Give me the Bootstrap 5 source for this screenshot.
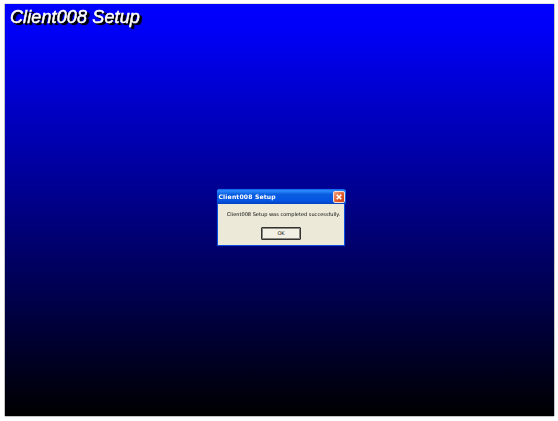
<!DOCTYPE html>
<html lang="en">
<head>
<meta charset="utf-8">
<title>Client008 Setup</title>
<link href="https://cdn.jsdelivr.net/npm/bootstrap@5.3.0/dist/css/bootstrap.min.css" rel="stylesheet">
<style>
html,body{height:100%;margin:0;background:#fff;overflow:hidden}
.shot-frame{width:558px;height:421px;padding:4px 4px 5px 5px}
.setup-screen{position:relative;height:412px;background:linear-gradient(to bottom,#0000ff 0%,#0000f8 6%,#000 100%);box-shadow:-1px 0 0 #c4c4c4,1px 0 0 #c4c4c4,0 1px 0 #c4c4c4,0 -1px 0 #e4e4e4}
.setup-title{margin:0;padding:2px 0 0 5px;font:italic 400 18px/22px "Liberation Sans",sans-serif;color:#fff;letter-spacing:.12px;-webkit-text-stroke:.5px #fff;text-shadow:1px 1px 0 #000,2px 2px 0 #000,3px 2px 1px #000;filter:blur(.25px)}
.xp-win{position:absolute;left:212px;top:185px;width:128px;height:57px;background:#ece9d8;border:1.5px solid #0a4ee0;border-top:0;border-radius:3px 3px 0 0;box-shadow:0 0 1px #003ccc}
.xp-bar{height:15px;margin:0 -1.5px;padding:0 1px 0 2px;background:linear-gradient(to bottom,#0a5fe8 0%,#2f8bff 12%,#0a5de0 35%,#0454e0 80%,#0340c0 100%);border-radius:3px 3px 0 0;color:#fff;font:700 6.1px/15px "DejaVu Sans",sans-serif;letter-spacing:.15px}
.xp-bar span{filter:blur(.25px)}
.xp-close{width:12px;height:12px;background:linear-gradient(135deg,#f0a080,#e05a28 60%,#c84018);border:.5px solid #f4e0d8;border-radius:2px;display:block}
.xp-msg{font:5.05px/8px "DejaVu Sans",sans-serif;color:#000;padding:6px 0 0 5px;white-space:nowrap;filter:blur(.15px)}
.xp-ok{display:block;margin:9px auto 0;width:40px;height:13px;padding:0;background:#f2f0e4;border:1px solid #333;outline:1px solid #8a887c;outline-offset:-2px;border-radius:1px;font:5px/9px "DejaVu Sans",sans-serif;color:#111}
</style>
</head>
<body>
<div class="shot-frame">
  <main class="setup-screen">
    <h1 class="setup-title">Client008 Setup</h1>
    <div class="xp-win" role="dialog">
      <div class="xp-bar d-flex align-items-center justify-content-between">
        <span>Client008 Setup</span>
        <svg class="xp-close" viewBox="0 0 11 11" aria-hidden="true"><path d="M3 3l5 5M8 3l-5 5" stroke="#fff" stroke-width="1.8" fill="none"/></svg>
      </div>
      <div class="xp-msg text-center">Client008 Setup was completed successfully.</div>
      <button type="button" class="xp-ok">OK</button>
    </div>
  </main>
</div>
<script src="https://cdn.jsdelivr.net/npm/bootstrap@5.3.0/dist/js/bootstrap.bundle.min.js"></script>
</body>
</html>
